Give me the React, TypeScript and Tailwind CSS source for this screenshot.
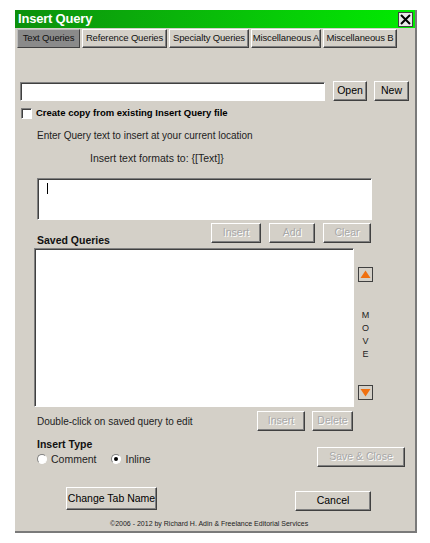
import React from "react";

const raised =
  "border border-t-white border-l-white border-r-[#404040] border-b-[#404040] shadow-[inset_-1px_-1px_#808080] bg-[#d4d0c8]";
const sunken =
  "border border-t-[#808080] border-l-[#808080] border-r-white border-b-white shadow-[inset_1px_1px_#404040] bg-white";

const Btn = ({ label, w, h = 20, disabled = false }: { label: string; w: number; h?: number; disabled?: boolean }) => (
  <div
    className={`${raised} flex items-center justify-center whitespace-nowrap text-[10.5px] ${disabled ? "text-[#a8a8a8] [text-shadow:1px_1px_#fff]" : "text-black"}`}
    style={{ width: w, height: h }}
  >
    {label}
  </div>
);

const tabs = ["Text Queries", "Reference Queries", "Specialty Queries", "Miscellaneous A", "Miscellaneous B"];
const tabW = [63, 85, 80, 70, 74];

const Arrow = ({ up }: { up: boolean }) => (
  <div className="w-[15px] h-[15px] border border-[#404040] bg-[#d4d0c8] flex items-center justify-center">
    <svg width="11" height="9" viewBox="0 0 11 9">
      {up ? <polygon points="5.5,0.5 10.5,8 0.5,8" fill="#f07010" /> : <polygon points="0.5,1 10.5,1 5.5,8.5" fill="#f07010" />}
    </svg>
  </div>
);

export default function App() {
  return (
    <div className="w-[430px] h-[543px] bg-white pt-[10px] pl-[15px] font-['Liberation_Sans',Arial,sans-serif]">
      <div className="w-[402px] h-[523px] flex flex-col bg-[#d4d0c8] border-r-2 border-b-2 border-[#7a7a7a]">
        {/* title bar */}
        <div className="h-[18px] flex items-center justify-between bg-gradient-to-r from-[#0c900c] to-[#00ec00] pl-[3px] pr-[2px]">
          <span className="text-white font-bold text-[13px] tracking-[-0.2px]">Insert Query</span>
          <div className="w-[15px] h-[15px] bg-[#e8e8e8] border border-[#404040] flex items-center justify-center">
            <svg width="11" height="11" viewBox="0 0 11 11">
              <path d="M1 1 L10 10 M10 1 L1 10" stroke="#000" strokeWidth="2" />
            </svg>
          </div>
        </div>

        {/* tabs */}
        <div className="flex mt-[1px] pl-[2px] gap-[2px] h-[19px]">
          {tabs.map((t, i) => (
            <div
              key={t}
              className={`flex items-center justify-center whitespace-nowrap text-[9.5px] tracking-[-0.15px] text-[#111] ${
                i === 0 ? "bg-[#8a8a8a] border border-t-[#bdbdbd] border-l-[#bdbdbd] border-r-[#404040] border-b-[#404040]" : raised
              }`}
              style={{ width: tabW[i] }}
            >
              {t}
            </div>
          ))}
        </div>

        {/* file row */}
        <div className="flex items-center mt-[33px] pl-[5px]">
          <div className={`${sunken} w-[305px] h-[19px]`} />
          <div className="ml-[8px]">
            <Btn label="Open" w={34} />
          </div>
          <div className="ml-[7px]">
            <Btn label="New" w={35} />
          </div>
        </div>

        <div className="flex items-center mt-[5px] pl-[6px] gap-[4px]">
          <div className={`${sunken} w-[11px] h-[11px]`} />
          <span className="text-[9.5px] font-bold text-black whitespace-nowrap">Create copy from existing Insert Query file</span>
        </div>

        <div className="mt-[9px] pl-[22px] text-[10px] text-[#222] leading-[14px] whitespace-nowrap">Enter Query text to insert at your current location</div>
        <div className="mt-[8px] pl-[75px] text-[10.5px] text-[#222] leading-[14px] whitespace-nowrap">Insert text formats to: {"{[Text]}"}</div>

        {/* query text */}
        <div className={`${sunken} ml-[22px] mt-[13px] w-[335px] h-[42px] pl-[9px] pt-[4px]`}>
          <div className="w-[1px] h-[11px] bg-black" />
        </div>

        <div className="flex mt-[3px] pl-[22px] pr-[44px] h-[22px]">
          <span className="self-end text-[10.5px] font-bold text-[#111] leading-[12px] mb-[-1px]">Saved Queries</span>
          <div className="ml-auto flex gap-[8px]">
            <Btn label="Insert" w={50} disabled />
            <Btn label="Add" w={46} disabled />
            <Btn label="Clear" w={48} disabled />
          </div>
        </div>

        {/* saved list + move */}
        <div className="flex mt-[3px] pl-[19px]">
          <div className={`${sunken} w-[320px] h-[159px]`} />
          <div className="ml-[4px] w-[15px] flex flex-col items-center pt-[19px]">
            <Arrow up />
            <div className="mt-[27px] flex flex-col items-center text-[9px] leading-[13px] text-[#222]">
              <span>M</span>
              <span>O</span>
              <span>V</span>
              <span>E</span>
            </div>
            <div className="mt-[24px]">
              <Arrow up={false} />
            </div>
          </div>
        </div>

        <div className="flex items-center mt-[4px] pl-[22px] pr-[62px]">
          <span className="text-[10px] text-[#222] whitespace-nowrap">Double-click on saved query to edit</span>
          <div className="ml-auto flex gap-[7px]">
            <Btn label="Insert" w={48} disabled />
            <Btn label="Delete" w={41} disabled />
          </div>
        </div>

        <div className="flex mt-[1px] pl-[22px] pr-[10px]">
          <div className="flex flex-col">
            <span className="text-[10.5px] font-bold text-[#111] mt-[5px] leading-[14px]">Insert Type</span>
            <div className="flex items-center mt-[1px] text-[10.5px] text-[#222] leading-[14px]">
              <div className="w-[10px] h-[10px] rounded-full bg-white border border-t-[#808080] border-l-[#808080] border-r-white border-b-white" />
              <span className="ml-[4px]">Comment</span>
              <div className="ml-[14px] w-[10px] h-[10px] rounded-full bg-white border border-t-[#808080] border-l-[#808080] border-r-white border-b-white flex items-center justify-center">
                <div className="w-[4px] h-[4px] rounded-full bg-black" />
              </div>
              <span className="ml-[5px]">Inline</span>
            </div>
          </div>
          <div className="ml-auto mt-[15px]">
            <Btn label="Save & Close" w={88} disabled />
          </div>
        </div>

        <div className="flex items-start mt-[20px] pl-[51px]">
          <Btn label="Change Tab Name" w={91} h={23} />
          <div className="ml-[138px] mt-[4px]">
            <Btn label="Cancel" w={76} h={20} />
          </div>
        </div>

        <div className="mt-[8px] pl-[95px] text-[7px] text-[#222] leading-[9px] whitespace-nowrap">©2006 - 2012 by Richard H. Adin &amp; Freelance Editorial Services</div>
      </div>
    </div>
  );
}
